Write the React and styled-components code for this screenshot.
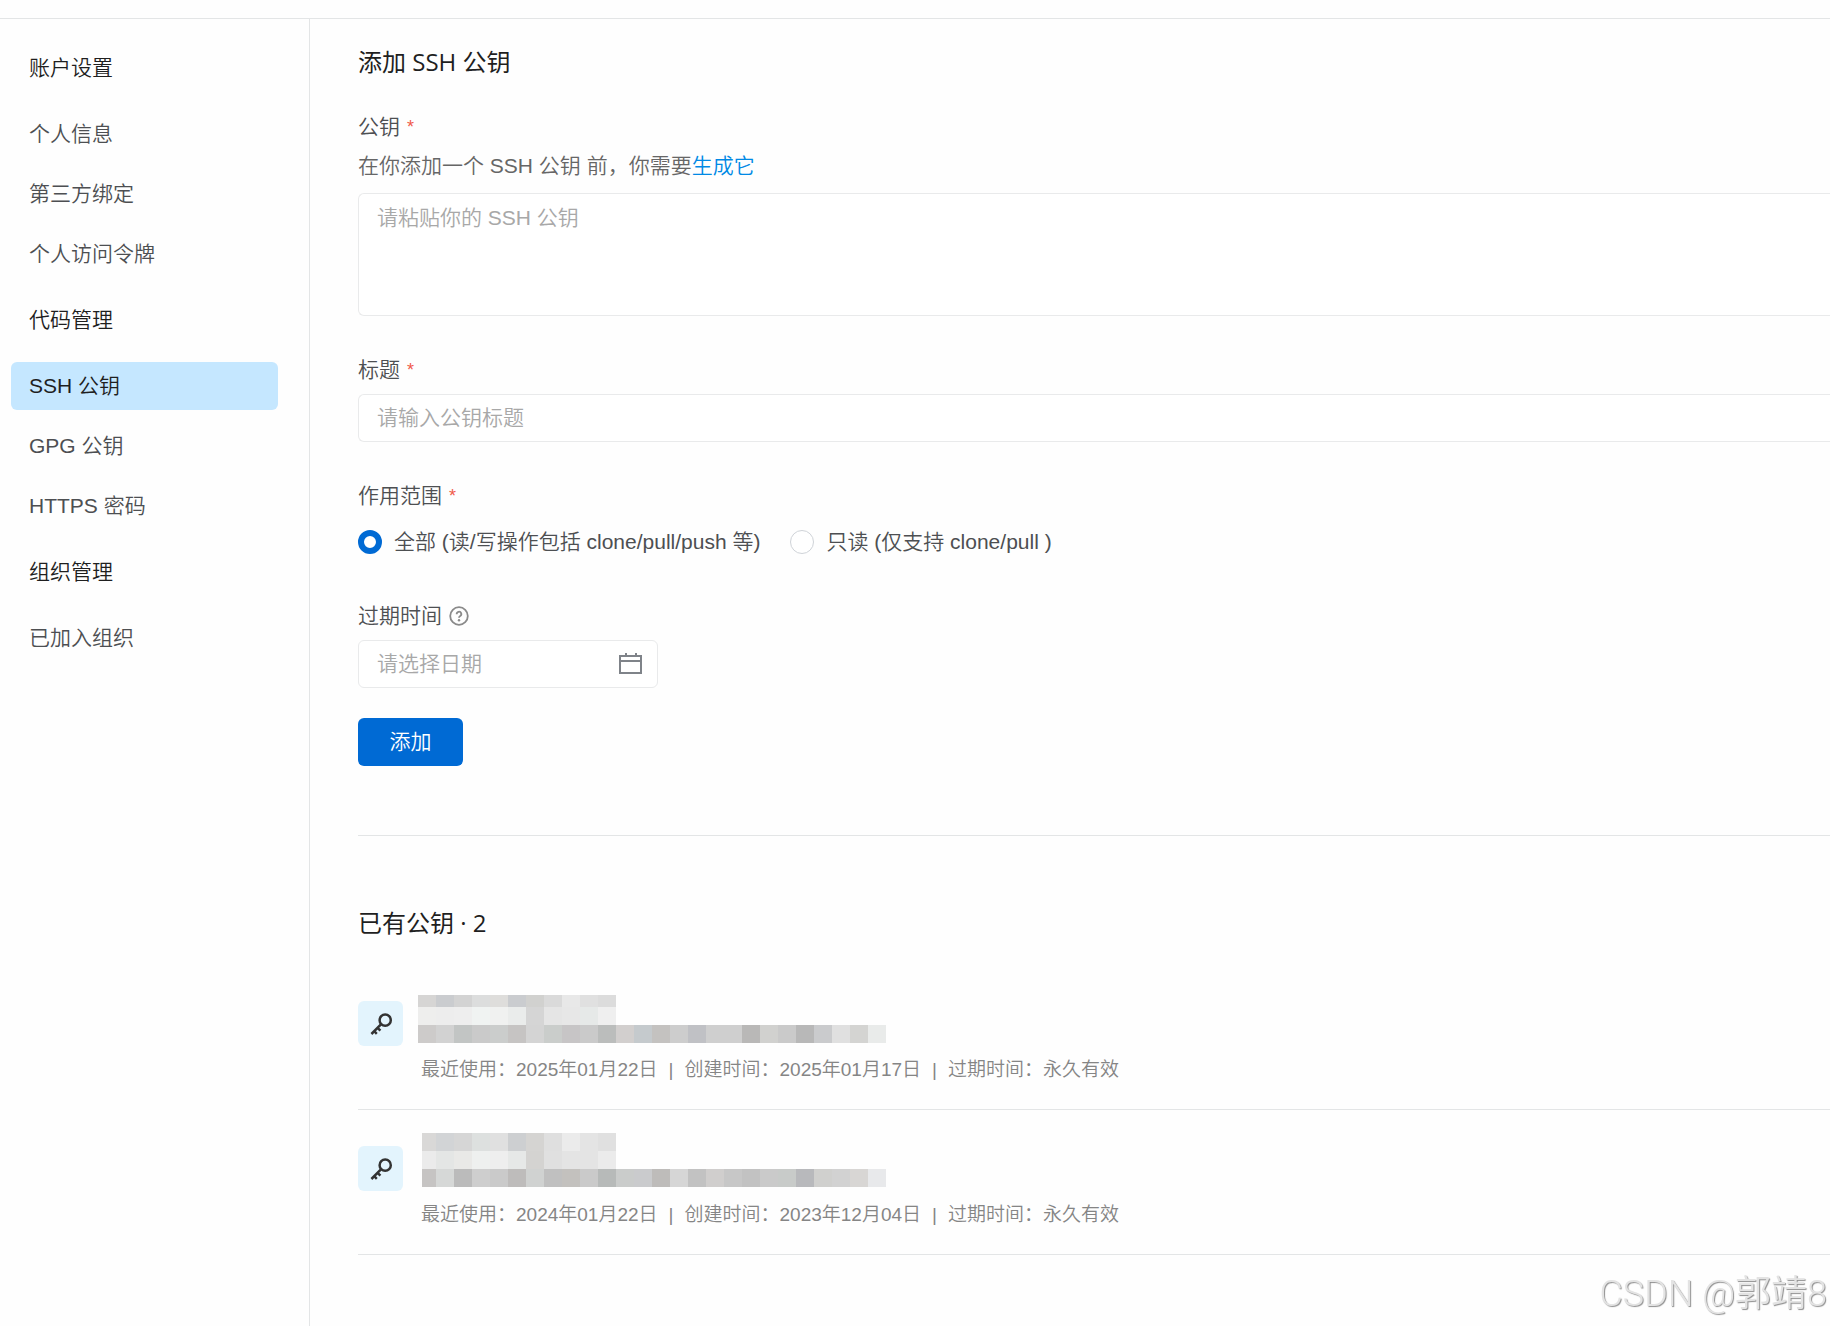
import React, { useState } from "react";
import styled, { createGlobalStyle } from "styled-components";

const colors = {
  blue: "#006ad4",
  link: "#0089e5",
  active: "#c5e7ff",
  keyTile: "#e3f4fd",
  line: "#e3e5e6",
  inputLine: "#e9eaeb",
  title: "#1f1f1f",
  text: "#4d4f52",
  muted: "#666666",
  meta: "#858585",
  placeholder: "#a8a8a8",
  required: "#f05a4b",
};

const navGroups = [
  {
    title: "账户设置",
    items: ["个人信息", "第三方绑定", "个人访问令牌"],
  },
  {
    title: "代码管理",
    items: ["SSH 公钥", "GPG 公钥", "HTTPS 密码"],
  },
  {
    title: "组织管理",
    items: ["已加入组织"],
  },
];

// y / height of every mosaic line, cells are 18px wide
const keys = [
  {
    id: 1,
    lastUsed: "2025年01月22日",
    created: "2025年01月17日",
    expires: "永久有效",
    start: 0,
    mosaic: [
      {
        y: 7,
        height: 12,
        cells:
          "d6d5d4 cacccf d3d3d3 dcdddd dedddb cacccf d1d1cf dadada e8e8e8 e0e0e0 dcdcdc",
      },
      {
        y: 19,
        height: 18,
        cells:
          "eeeeed ededed eeeeee f0f3f2 f0f1f0 eaeceb d5d5d5 e5e5e5 e7e7e7 e6e9e8 efefef",
      },
      {
        y: 37,
        height: 18,
        cells:
          "cdcbca d2d2d2 c2c5c4 cacaca cbcdcc c6c4c3 d4d4d4 cacdcb c7c5c6 cacaca bbbdbc d2cfce c5cacd c4c2c0 cdcdcd c0c1c5 cfcfcf cfcfcf b9b8b7 d1d1cf cacaca b8b8b8 cacbcd e0e0e0 d4d4d2 e9ebea",
      },
    ],
  },
  {
    id: 2,
    lastUsed: "2024年01月22日",
    created: "2023年12月04日",
    expires: "永久有效",
    start: 4,
    mosaic: [
      {
        y: 0,
        height: 18,
        cells:
          "d9d8d7 d2d4d6 d6d6d6 dde0df e0e0e0 cdcfd1 d5d4d2 dfdfdf ebebeb e4e4e4 e0e0e0",
      },
      {
        y: 18,
        height: 18,
        cells:
          "ebebeb e4e6e5 e9e9e7 eef0ef eeeeee e6e8e7 d4d3d1 e0e0e0 e4e4e4 e4e4e4 ebebeb",
      },
      {
        y: 36,
        height: 18,
        cells:
          "c6c4c3 d6d8d7 bbbbbb cecece cacaca bebcbb d0d2d1 c0c0c0 c3c1be cacaca b7bab9 cacccb cacbcd bebcba d6d6d6 c2c2c2 d0cecd c7c7c7 c2c2c2 cacaca c8cbc9 b8b9bc d0d0ce d2d2d2 d8d6d4 e8e9eb",
      },
    ],
  },
];

const KeyIcon = () => (
  <svg
    width="24"
    height="24"
    viewBox="0 0 24 24"
    fill="none"
    stroke="#333333"
    strokeWidth="2.5"
    aria-hidden="true"
  >
    <circle cx="16.2" cy="8.2" r="5.6" />
    <path d="M12.2 12.2 2.4 22M8.6 15.8l2.8 2.8M5.2 19.2l2.6 2.6" />
  </svg>
);

const HelpIcon = () => (
  <svg
    width="20"
    height="20"
    viewBox="0 0 20 20"
    fill="none"
    stroke="#8a8a8a"
    strokeWidth="1.8"
    aria-hidden="true"
  >
    <circle cx="10" cy="10" r="8.8" />
    <path d="M7.7 8.2a2.3 2.3 0 1 1 3.5 1.8c-.8.5-1.2.9-1.2 1.8" />
    <circle cx="10" cy="14.2" r="1.2" fill="#8a8a8a" stroke="none" />
  </svg>
);

const CalendarIcon = () => (
  <svg
    width="24"
    height="24"
    viewBox="0 0 24 24"
    fill="none"
    stroke="#7f8389"
    strokeWidth="2"
    aria-hidden="true"
  >
    <path d="M2 4h21v17H2zM2 9h21M8 1v3M18 1v3" />
  </svg>
);

const Mosaic = ({ lines, start }) => (
  <svg width="468" height="55" viewBox="0 0 468 55" aria-hidden="true">
    {lines.map((line) =>
      line.cells.split(" ").map((cell, i) => {
        const x = i === 0 ? start : i * 18;
        return (
          <rect
            key={`${line.y}-${i}`}
            x={x}
            y={line.y}
            width={(i + 1) * 18 - x}
            height={line.height}
            fill={`#${cell}`}
            shapeRendering="crispEdges"
          />
        );
      })
    )}
  </svg>
);

const App = () => {
  const [publicKey, setPublicKey] = useState("");
  const [title, setTitle] = useState("");
  const [date, setDate] = useState("");
  const [scope, setScope] = useState("all");
  const [active, setActive] = useState("SSH 公钥");

  const handleSubmit = (e) => {
    e.preventDefault();
  };

  return (
    <Page>
      <GlobalStyle />
      <TopBar />
      <Layout>
        <Sidebar>
          {navGroups.map((group) => (
            <React.Fragment key={group.title}>
              <NavTitle>{group.title}</NavTitle>
              {group.items.map((item) => (
                <NavLink
                  key={item}
                  href="#"
                  $active={item === active}
                  onClick={() => setActive(item)}
                >
                  {item}
                </NavLink>
              ))}
            </React.Fragment>
          ))}
        </Sidebar>
        <Main>
          <Title>添加 SSH 公钥</Title>
          <Form onSubmit={handleSubmit}>
            <Field>
              <Label htmlFor="key">
                公钥<Required>*</Required>
              </Label>
              <Hint>
                在你添加一个 SSH 公钥 前，你需要<Link href="#">生成它</Link>
              </Hint>
              <TextArea
                id="key"
                placeholder="请粘贴你的 SSH 公钥"
                value={publicKey}
                onChange={(e) => setPublicKey(e.target.value)}
              />
            </Field>
            <Field>
              <Label htmlFor="title">
                标题<Required>*</Required>
              </Label>
              <Input
                id="title"
                type="text"
                placeholder="请输入公钥标题"
                value={title}
                onChange={(e) => setTitle(e.target.value)}
              />
            </Field>
            <Field role="radiogroup" aria-labelledby="scope-label">
              <Label as="span" id="scope-label">
                作用范围<Required>*</Required>
              </Label>
              <RadioRow>
                <RadioLabel>
                  <Radio
                    name="scope"
                    checked={scope === "all"}
                    onChange={() => setScope("all")}
                  />
                  全部 (读/写操作包括 clone/pull/push 等)
                </RadioLabel>
                <RadioLabel>
                  <Radio
                    name="scope"
                    checked={scope === "read"}
                    onChange={() => setScope("read")}
                  />
                  只读 (仅支持 clone/pull )
                </RadioLabel>
              </RadioRow>
            </Field>
            <Field>
              <Label htmlFor="date">
                过期时间
                <HelpIcon />
              </Label>
              <DateBox>
                <DateInput
                  id="date"
                  type="text"
                  placeholder="请选择日期"
                  value={date}
                  onChange={(e) => setDate(e.target.value)}
                />
                <CalendarIcon />
              </DateBox>
            </Field>
            <SubmitButton type="submit">添加</SubmitButton>
          </Form>
          <Title>已有公钥 · {keys.length}</Title>
          <KeyList>
            {keys.map((item) => (
              <KeyRow key={item.id}>
                <KeyTile>
                  <KeyIcon />
                </KeyTile>
                <KeyBody>
                  <Mosaic lines={item.mosaic} start={item.start} />
                  <Meta>
                    <span>最近使用：{item.lastUsed}</span>
                    <span>|</span>
                    <span>创建时间：{item.created}</span>
                    <span>|</span>
                    <span>过期时间：{item.expires}</span>
                  </Meta>
                </KeyBody>
              </KeyRow>
            ))}
          </KeyList>
        </Main>
      </Layout>
      <Watermark>CSDN @郭靖8</Watermark>
    </Page>
  );
};

export default App;

const GlobalStyle = createGlobalStyle`
  * {
    box-sizing: border-box;
  }

  body {
    margin: 0;
    background: #fefefe;
    color: ${colors.text};
    font-family: "Liberation Sans", "Noto Sans CJK SC", sans-serif;
    font-size: 21px;
    font-weight: 350;
    line-height: 32px;
  }

  input, textarea, button {
    font: inherit;
    color: inherit;
  }

  input::placeholder, textarea::placeholder {
    color: ${colors.placeholder};
    opacity: 1;
  }
`;

const Page = styled.div`
  display: flex;
  flex-direction: column;
  min-height: 100vh;
`;

const TopBar = styled.header`
  height: 19px;
  border-bottom: 1px solid ${colors.line};
`;

const Layout = styled.div`
  display: flex;
  flex: 1;
`;

const Sidebar = styled.nav`
  display: flex;
  flex-direction: column;
  gap: 12px;
  flex: 0 0 310px;
  padding: 19px 31px 19px 11px;
  border-right: 1px solid ${colors.line};
`;

const NavTitle = styled.div`
  padding: 14px 18px;
  color: ${colors.title};
`;

const NavLink = styled.a`
  padding: 8px 18px;
  border-radius: 6px;
  background: ${(props) => (props.$active ? colors.active : "transparent")};
  color: ${(props) => (props.$active ? colors.title : colors.text)};
  text-decoration: none;
`;

const Main = styled.main`
  flex: 1;
  min-width: 0;
  padding: 25px 0 48px 48px;
`;

const Title = styled.h2`
  margin: 0;
  color: ${colors.title};
  font-family: "Open Sans", "Noto Sans CJK SC", sans-serif;
  font-size: 24px;
  font-weight: 400;
  line-height: 36px;
`;

const Form = styled.form`
  margin-bottom: 69px;
  padding: 31px 0 69px;
  border-bottom: 1px solid ${colors.line};
`;

const Field = styled.div`
  display: flex;
  flex-direction: column;
  align-items: stretch;
  margin-bottom: 38px;

  &:last-of-type {
    margin-bottom: 30px;
  }
`;

const Label = styled.label`
  display: flex;
  align-items: center;
  gap: 7px;
  margin-bottom: 8px;
`;

const Required = styled.span`
  color: ${colors.required};
  font-size: 18px;
`;

const Hint = styled.p`
  margin: 0 0 12px;
  color: ${colors.muted};
  line-height: 30px;
`;

const Link = styled.a`
  color: ${colors.link};
  text-decoration: none;
`;

const Input = styled.input`
  height: 48px;
  padding: 0 18px;
  border: 1px solid ${colors.inputLine};
  border-right: 0;
  border-radius: 6px 0 0 6px;
  background: #ffffff;
`;

const TextArea = styled.textarea`
  height: 123px;
  padding: 8px 18px;
  border: 1px solid ${colors.inputLine};
  border-right: 0;
  border-radius: 6px 0 0 6px;
  background: #ffffff;
  resize: none;
`;

const RadioRow = styled.div`
  display: flex;
  gap: 30px;
  padding: 6px 0 4px;
`;

const RadioLabel = styled.label`
  display: flex;
  align-items: center;
  gap: 12px;
`;

const Radio = styled.input.attrs({ type: "radio" })`
  appearance: none;
  width: 24px;
  height: 24px;
  margin: 0;
  border: 1px solid #cfd3d8;
  border-radius: 50%;
  background: #ffffff;

  &:checked {
    border: 6px solid ${colors.blue};
  }
`;

const DateBox = styled.div`
  display: flex;
  align-items: center;
  width: 300px;
  height: 48px;
  padding: 0 15px 0 18px;
  border: 1px solid ${colors.inputLine};
  border-radius: 6px;
  background: #ffffff;
`;

const DateInput = styled.input`
  flex: 1;
  min-width: 0;
  padding: 0;
  border: 0;
  outline: 0;
  background: transparent;
`;

const SubmitButton = styled.button`
  display: block;
  min-width: 105px;
  height: 48px;
  padding: 0 30px;
  border: 0;
  border-radius: 6px;
  background: ${colors.blue};
  color: #ffffff;
`;

const KeyList = styled.ul`
  margin: 24px 0 0;
  padding: 0;
  list-style: none;
`;

const KeyRow = styled.li`
  display: flex;
  gap: 15px;
  padding: 23px 0 25px;
  border-bottom: 1px solid ${colors.line};
`;

const KeyTile = styled.div`
  display: flex;
  align-items: center;
  justify-content: center;
  width: 45px;
  height: 45px;
  margin-top: 13px;
  border-radius: 6px;
  background: ${colors.keyTile};
`;

const KeyBody = styled.div`
  display: flex;
  flex-direction: column;
  gap: 13px;
`;

const Meta = styled.div`
  display: flex;
  gap: 11px;
  padding-left: 3px;
  color: ${colors.meta};
  font-size: 19px;
  line-height: 28px;
`;

const Watermark = styled.div`
  position: fixed;
  right: 3px;
  bottom: 8px;
  color: #e3e3e3;
  font-family: Roboto, "Noto Sans CJK SC", sans-serif;
  font-size: 36px;
  line-height: 48px;
  text-shadow: 1px 1px 1px #8f8f8f;
`;
